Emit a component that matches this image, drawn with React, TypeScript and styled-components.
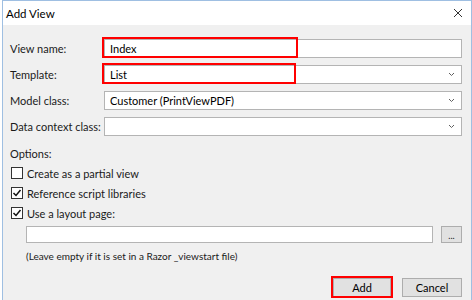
import React from 'react'
import styled, { createGlobalStyle } from 'styled-components'

const GlobalStyle = createGlobalStyle`
    html, body {
        margin: 0;
        padding: 0;
        background: #ffffff;
    }
    body {
        font-family: Lato, "Open Sans", "Liberation Sans", sans-serif;
        font-size: 11px;
        color: #1a1a1a;
    }
`

const StyledWindow = styled.div`
    margin-left: 2px;
    width: 470px;
    height: 300px;
    box-sizing: border-box;
    border: 1px solid #9fbfe2;
    border-bottom: none;
    display: flex;
    flex-direction: column;
    overflow: hidden;
`

const StyledTitleBar = styled.div`
    height: 24px;
    flex-shrink: 0;
    background: #ffffff;
    display: flex;
    align-items: center;
    justify-content: space-between;
    padding: 0 8px 0 3px;
    font-size: 11.5px;
    color: #000;
`

const StyledBody = styled.div`
    flex: 1;
    background: #f0f0f0;
    padding: 14px 9px 0 7px;
    display: flex;
    flex-direction: column;
`

const StyledFields = styled.div`
    display: flex;
    flex-direction: column;
    gap: 7px;
`

const StyledFieldRow = styled.div`
    display: grid;
    grid-template-columns: 94px 1fr;
    align-items: center;
    height: 19px;
`

const StyledLabel = styled.span`
    line-height: 19px;
    white-space: nowrap;
`

const StyledField = styled.div`
    position: relative;
    height: 19px;
`

const StyledInput = styled.div<{ $combo?: boolean }>`
    height: 100%;
    box-sizing: border-box;
    border: 1px solid #b4b4b4;
    background: #fff;
    display: flex;
    align-items: center;
    justify-content: space-between;
    padding: 0 ${({ $combo }) => ($combo ? '6px' : '4px')} 0 5px;
    color: #000;
`

const StyledHighlight = styled.div<{ $width: number }>`
    position: absolute;
    left: -2px;
    top: -2px;
    bottom: 0;
    width: ${({ $width }) => $width}px;
    border: 2px solid #ff0000;
    box-sizing: border-box;
    pointer-events: none;
`

const StyledOptions = styled.div`
    margin-top: 7px;
    display: flex;
    flex-direction: column;
`

const StyledOptionRow = styled.div`
    height: 20px;
    display: flex;
    align-items: center;
    gap: 4px;
`

const StyledCheckbox = styled.span`
    width: 12px;
    height: 12px;
    margin-left: 1px;
    box-sizing: border-box;
    border: 1px solid #333;
    background: #fff;
    display: flex;
    align-items: center;
    justify-content: center;
`

const StyledLayoutRow = styled.div`
    margin: 3px 0 0 16px;
    height: 17px;
    display: flex;
    gap: 8px;
`

const StyledLayoutInput = styled.div`
    flex: 1;
    box-sizing: border-box;
    border: 1px solid #b4b4b4;
    background: #fff;
`

const StyledBrowseButton = styled.div`
    width: 21px;
    box-sizing: border-box;
    border: 1px solid #adadad;
    background: #e1e1e1;
    display: flex;
    align-items: flex-end;
    justify-content: center;
    font-size: 9px;
    line-height: 12px;
`

const StyledHint = styled.div`
    margin: 5px 0 0 16px;
    line-height: 16px;
    font-size: 10px;
`

const StyledButtonRow = styled.div`
    margin-top: 14px;
    display: flex;
    justify-content: flex-end;
    gap: 11px;
`

const StyledButtonWrap = styled.div`
    position: relative;
`

const StyledButton = styled.div<{ $width: number }>`
    width: ${({ $width }) => $width}px;
    height: 19px;
    box-sizing: border-box;
    border: 1px solid #adadad;
    background: #e1e1e1;
    display: flex;
    align-items: center;
    justify-content: center;
    color: #000;
`

const ButtonHighlight = styled.div`
    position: absolute;
    left: -2px;
    right: -2px;
    top: -2px;
    bottom: -1px;
    border: 2px solid #ff0000;
    pointer-events: none;
`

const Chevron = () => (
    <svg width="7" height="5" viewBox="0 0 7 5">
        <path d="M1 1 L3.5 3.5 L6 1" fill="none" stroke="#606060" strokeWidth="1" />
    </svg>
)

const CloseIcon = () => (
    <svg width="10" height="10" viewBox="0 0 10 10">
        <path d="M1 1 L9 9 M9 1 L1 9" stroke="#333" strokeWidth="1" />
    </svg>
)

const Check = () => (
    <svg width="10" height="10" viewBox="0 0 10 10">
        <path d="M1.5 5 L4 7.5 L8.5 2" fill="none" stroke="#111" strokeWidth="1.5" />
    </svg>
)

interface FieldDef {
    label: string
    value: string
    combo?: boolean
    highlight?: number
}

const fields: FieldDef[] = [
    { label: 'View name:', value: 'Index', highlight: 196 },
    { label: 'Template:', value: 'List', combo: true, highlight: 194 },
    { label: 'Model class:', value: 'Customer (PrintViewPDF)', combo: true },
    { label: 'Data context class:', value: '', combo: true },
]

const options = [
    { label: 'Create as a partial view', checked: false },
    { label: 'Reference script libraries', checked: true },
    { label: 'Use a layout page:', checked: true },
]

const App: React.FC = () => {
    return (
        <>
            <GlobalStyle />
            <StyledWindow>
                <StyledTitleBar>
                    <span>Add View</span>
                    <CloseIcon />
                </StyledTitleBar>
                <StyledBody>
                    <StyledFields>
                        {fields.map((field) => (
                            <StyledFieldRow key={field.label}>
                                <StyledLabel>{field.label}</StyledLabel>
                                <StyledField>
                                    <StyledInput $combo={field.combo}>
                                        <span>{field.value}</span>
                                        {field.combo && <Chevron />}
                                    </StyledInput>
                                    {field.highlight && (
                                        <StyledHighlight $width={field.highlight} />
                                    )}
                                </StyledField>
                            </StyledFieldRow>
                        ))}
                    </StyledFields>
                    <StyledOptions>
                        <StyledOptionRow>Options:</StyledOptionRow>
                        {options.map((option) => (
                            <StyledOptionRow key={option.label}>
                                <StyledCheckbox>{option.checked && <Check />}</StyledCheckbox>
                                <span>{option.label}</span>
                            </StyledOptionRow>
                        ))}
                    </StyledOptions>
                    <StyledLayoutRow>
                        <StyledLayoutInput />
                        <StyledBrowseButton>...</StyledBrowseButton>
                    </StyledLayoutRow>
                    <StyledHint>(Leave empty if it is set in a Razor _viewstart file)</StyledHint>
                    <StyledButtonRow>
                        <StyledButtonWrap>
                            <StyledButton $width={58}>Add</StyledButton>
                            <ButtonHighlight />
                        </StyledButtonWrap>
                        <StyledButton $width={60}>Cancel</StyledButton>
                    </StyledButtonRow>
                </StyledBody>
            </StyledWindow>
        </>
    )
}

export default App
